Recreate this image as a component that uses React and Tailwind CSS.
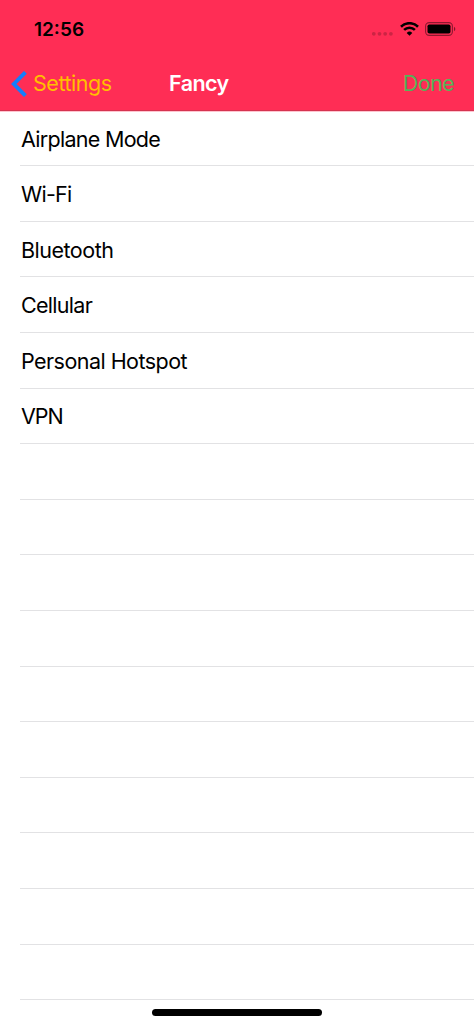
import React from "react";

const rows = [
  { label: "Airplane Mode", tracking: "tracking-[-0.71px]" },
  { label: "Wi-Fi", tracking: "tracking-[-0.75px]" },
  { label: "Bluetooth", tracking: "tracking-[-0.5px]" },
  { label: "Cellular", tracking: "tracking-[-0.7px]" },
  { label: "Personal Hotspot", tracking: "tracking-[-0.54px]" },
  { label: "VPN", tracking: "tracking-[-1px]" },
];

// the table keeps drawing separators below the last item
const TOTAL_ROWS = 16;

const StatusBar = () => (
  <div className="flex h-[58px] items-center justify-between pl-[34px] pr-[18px]">
    <span className="pt-px text-[19px] font-semibold leading-6 tracking-normal text-black">12:56</span>
    <div className="flex items-center">
      <svg width="21" height="14" viewBox="0 0 21 14" fill="#000" fillOpacity="0.2">
        <circle cx="1.8" cy="11.8" r="1.9" />
        <circle cx="7.5" cy="11.8" r="1.9" />
        <circle cx="13.2" cy="11.8" r="1.9" />
        <circle cx="18.9" cy="11.8" r="1.9" />
      </svg>
      <svg className="ml-[7px]" width="19" height="14" viewBox="0 0 19 14" fill="none" stroke="#000" strokeWidth="2.6">
        <path d="M1 4.7A12.1 12.1 0 0 1 18 4.7" />
        <path d="M4.1 7.9A7.7 7.7 0 0 1 14.9 7.9" />
        <path d="M9.5 13.7L6.7 10.9A4 4 0 0 1 12.3 10.9Z" fill="#000" stroke="none" />
      </svg>
      <svg className="ml-[6px]" width="31" height="14" viewBox="0 0 31 14">
        <rect x="0.6" y="0.6" width="26.8" height="12.8" rx="3.6" fill="none" stroke="#000" strokeOpacity="0.45" strokeWidth="1.1" />
        <rect x="2.5" y="2.5" width="23" height="9" rx="1.8" fill="#000" />
        <path d="M29 4.8C30.8 5.6 30.8 8.4 29 9.2Z" fill="#000" fillOpacity="0.5" />
      </svg>
    </div>
  </div>
);

const NavBar = () => (
  <div className="grid h-[51px] grid-cols-[169px_1fr_auto] items-center pr-5 text-[21.5px] leading-7">
    <button className="flex items-center pl-[11px] text-[#ffbf00]">
      <svg width="16" height="26" viewBox="0 0 16 26" fill="none" stroke="#147efb" strokeWidth="3.9">
        <path d="M14.4 1.3L2.8 13L14.4 24.7" />
      </svg>
      <span className="ml-[6px] pb-px tracking-[-0.45px]">Settings</span>
    </button>
    <h1 className="pb-px font-semibold tracking-[-0.6px] text-white">Fancy</h1>
    <button className="pb-px tracking-[-0.6px] text-[#55b458]">Done</button>
  </div>
);

const Row = ({ label, tracking }) => (
  <li className="ml-5 flex h-[55.6px] items-center border-b border-[#e2e2e4]">
    {label && <span className={`pl-px pt-[1.2px] text-[21.5px] leading-7 ${tracking}`}>{label}</span>}
  </li>
);

const App = () => (
  <div className="flex h-[1026px] w-[474px] flex-col overflow-hidden bg-white font-['Inter',sans-serif] text-black">
    <header className="h-[111px] shrink-0 border-b border-[#d53350] bg-[#ff2d55] shadow-[0_1px_0_#ffc4cf]">
      <StatusBar />
      <NavBar />
    </header>
    <ul className="-mt-[0.4px] shrink-0">
      {Array.from({ length: TOTAL_ROWS }, (_, i) => (
        <Row key={i} {...rows[i]} />
      ))}
    </ul>
    <div className="mx-auto mt-[9px] h-[7px] w-[170px] shrink-0 rounded-full bg-black" />
  </div>
);

export default App;
